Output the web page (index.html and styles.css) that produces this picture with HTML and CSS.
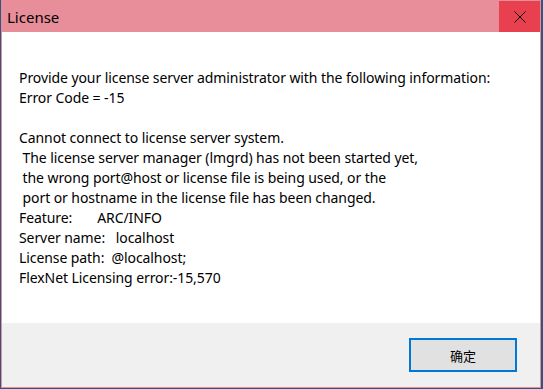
FILE: index.html
```html
<!DOCTYPE html>
<html lang="en">
<head>
  <meta charset="UTF-8" />
  <title>License</title>
  <link rel="stylesheet" href="styles.css">
</head>
<body>

  <div class="window">
    <div class="titlebar">
      <span class="title">License</span>
      <span class="close">
        <svg width="12" height="12" viewBox="0 0 12 12">
          <path d="M0.5 0.5 L11.5 11.5 M11.5 0.5 L0.5 11.5" stroke="#000" stroke-width="1" fill="none" />
        </svg>
      </span>
    </div>

    <!-- message -->
    <div class="content">
<div class="line">Provide your license server administrator with the following information:</div>
<div class="line">Error Code = -15</div>
<div class="line"> </div>
<div class="line">Cannot connect to license server system.</div>
<div class="line"> The license server manager (lmgrd) has not been started yet,</div>
<div class="line"> the wrong port@host or license file is being used, or the</div>
<div class="line"> port or hostname in the license file has been changed.</div>
<div class="line">Feature:       ARC/INFO</div>
<div class="line">Server name:   localhost</div>
<div class="line">License path:  @localhost;</div>
<div class="line">FlexNet Licensing error:-15,570</div>
    </div>

    <div class="footer">
      <button class="ok-btn">确定</button>
    </div>
  </div>

</body>
</html>
```

FILE: styles.css
```css
body {
  margin: 0;
  background-color: #2f5585;
  font-family: "Noto Sans", "Noto Sans CJK SC", sans-serif;
}

.window {
  width: 540px;
  height: 388px;
  margin-left: 1px;
  box-sizing: border-box;
  border: 1px solid #e88d9a;
  background-color: white;
  display: flex;
  flex-direction: column;
}

.titlebar {
  height: 31px;
  background-color: #e88d9a;
  display: flex;
  align-items: center;
  justify-content: space-between;
}

.title {
  padding-left: 5px;
  font-size: 15px;
  color: #000;
}

.close {
  width: 41px;
  height: 31px;
  background-color: #e8404f;
  display: flex;
  align-items: center;
  justify-content: center;
}

.content {
  flex: 1;
  padding: 36px 0 0 17px;
  font-size: 14px;
  line-height: 20px;
  letter-spacing: -0.08px;
  color: #000;
}

.line {
  white-space: pre;
  height: 20px;
}

.footer {
  height: 64px;
  background-color: #f0f0f0;
  display: flex;
  justify-content: flex-end;
  align-items: flex-start;
  padding: 15px 23px 0 0;
  box-sizing: border-box;
}

.ok-btn {
  width: 108px;
  height: 34px;
  background-color: #e1e1e1;
  border: 2px solid #0078d7;
  font-family: "Noto Sans CJK SC", sans-serif;
  font-size: 13px;
  color: #000;
  padding: 0;
}
```
